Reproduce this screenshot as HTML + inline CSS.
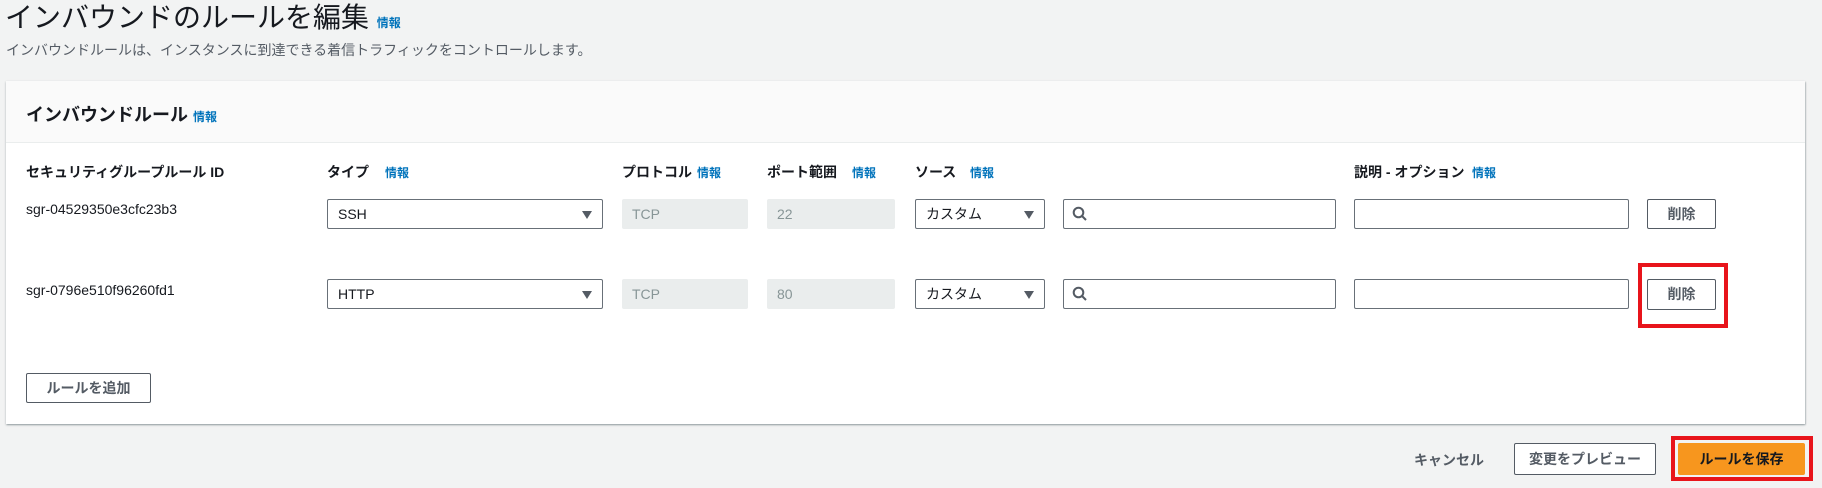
<!DOCTYPE html>
<html><head><meta charset="utf-8"><style>
*{box-sizing:border-box;margin:0;padding:0}
body{width:1822px;height:488px;background:#f2f3f3;font-family:"Liberation Sans","Noto Sans CJK JP",sans-serif;color:#16191f;position:relative;overflow:hidden;font-size:14px}
.a{position:absolute;white-space:nowrap}
.info{color:#0073bb;font-size:12px;font-weight:bold}
.panel{position:absolute;left:6px;top:81px;width:1799px;height:343px;background:#fff;box-shadow:0 1px 2px rgba(0,28,36,.3),1px 1px 1px rgba(0,28,36,.15)}
.ph{position:absolute;left:0;top:0;width:100%;height:62px;background:#fafafa;border-bottom:1px solid #eaeded}
.box{position:absolute;height:30px;border:1px solid #687078;border-radius:2px;background:#fff;font-size:14px;padding-left:10px;line-height:28px}
.dis{position:absolute;height:30px;background:#eaeded;border-radius:2px;color:#879596;font-size:14px;padding-left:10px;line-height:30px}
.arr{position:absolute;right:10px;top:11px;width:0;height:0;border-left:5px solid transparent;border-right:5px solid transparent;border-top:8px solid #545b64}
.btn{position:absolute;border:1px solid #545b64;border-radius:2px;background:#fff;font-weight:bold;font-size:14px;text-align:center;color:#545b64}
.th{font-weight:bold;font-size:14px}
.red{position:absolute;border:4px solid #e8141b}
</style></head><body>
<div class="a" style="left:5px;top:-4px;font-size:28px;color:#16191f">インバウンドのルールを編集 <span class="info" style="font-size:12px">情報</span></div>
<div class="a" style="left:6px;top:40px;font-size:14px;color:#545b64">インバウンドルールは、インスタンスに到達できる着信トラフィックをコントロールします。</div>
<div class="panel">
<div class="ph"></div>
<div class="a" style="left:20px;top:20px;font-size:18px;font-weight:bold">インバウンドルール <span class="info">情報</span></div>
</div>
<div class="a th" style="left:26px;top:162px">セキュリティグループルール ID</div>
<div class="a th" style="left:327px;top:162px">タイプ</div><div class="a info" style="left:385px;top:164px">情報</div>
<div class="a th" style="left:622px;top:162px">プロトコル</div><div class="a info" style="left:697px;top:164px">情報</div>
<div class="a th" style="left:767px;top:162px">ポート範囲</div><div class="a info" style="left:852px;top:164px">情報</div>
<div class="a th" style="left:915px;top:162px">ソース</div><div class="a info" style="left:970px;top:164px">情報</div>
<div class="a th" style="left:1354px;top:162px">説明 - オプション</div><div class="a info" style="left:1472px;top:164px">情報</div>

<div class="a" style="left:26px;top:201px">sgr-04529350e3cfc23b3</div>
<div class="box" style="left:327px;top:199px;width:276px">SSH<div class="arr"></div></div>
<div class="dis" style="left:622px;top:199px;width:126px">TCP</div>
<div class="dis" style="left:767px;top:199px;width:128px">22</div>
<div class="box" style="left:915px;top:199px;width:130px">カスタム<div class="arr"></div></div>
<div class="box" style="left:1063px;top:199px;width:273px"><svg width="16" height="16" style="position:absolute;left:8px;top:6px" viewBox="0 0 16 16"><circle cx="6.5" cy="6.5" r="4.8" fill="none" stroke="#545b64" stroke-width="2"/><path d="M10 10l4 4" stroke="#545b64" stroke-width="2"/></svg></div>
<div class="box" style="left:1354px;top:199px;width:275px"></div>
<div class="btn" style="left:1647px;top:199px;width:69px;height:30px;line-height:28px">削除</div>

<div class="a" style="left:26px;top:282px">sgr-0796e510f96260fd1</div>
<div class="box" style="left:327px;top:279px;width:276px">HTTP<div class="arr"></div></div>
<div class="dis" style="left:622px;top:279px;width:126px">TCP</div>
<div class="dis" style="left:767px;top:279px;width:128px">80</div>
<div class="box" style="left:915px;top:279px;width:130px">カスタム<div class="arr"></div></div>
<div class="box" style="left:1063px;top:279px;width:273px"><svg width="16" height="16" style="position:absolute;left:8px;top:6px" viewBox="0 0 16 16"><circle cx="6.5" cy="6.5" r="4.8" fill="none" stroke="#545b64" stroke-width="2"/><path d="M10 10l4 4" stroke="#545b64" stroke-width="2"/></svg></div>
<div class="box" style="left:1354px;top:279px;width:275px"></div>
<div class="btn" style="left:1647px;top:279px;width:69px;height:31px;line-height:29px">削除</div>
<div class="red" style="left:1638px;top:263px;width:90px;height:65px"></div>

<div class="btn" style="left:26px;top:373px;width:125px;height:30px;line-height:28px">ルールを追加</div>

<div class="a" style="left:1414px;top:450px;font-weight:bold;color:#545b64">キャンセル</div>
<div class="btn" style="left:1514px;top:443px;width:142px;height:32px;line-height:30px;color:#545b64">変更をプレビュー</div>
<div class="a" style="left:1678px;top:443px;width:127px;height:32px;border-radius:2px;font-weight:bold;text-align:center;line-height:32px;color:#16191f;background:#f7961e">ルールを保存</div>
<div class="red" style="left:1671px;top:436px;width:142px;height:45px"></div>
</body></html>
